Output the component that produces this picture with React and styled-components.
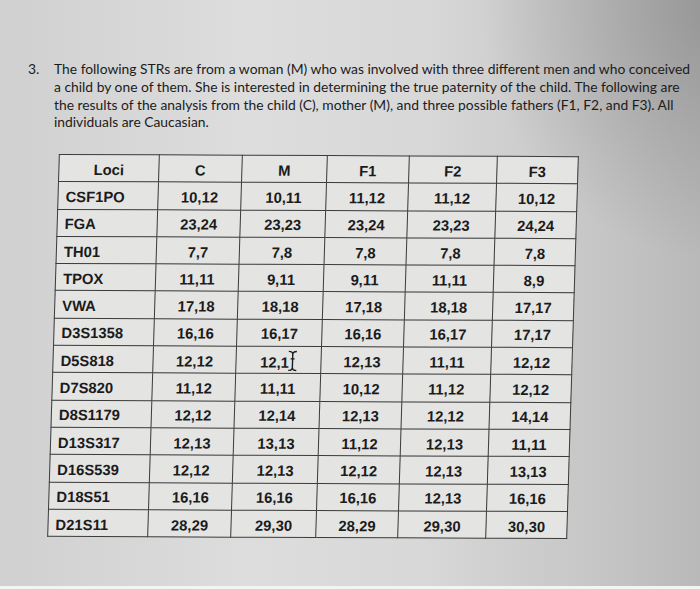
import React from 'react';
import styled, { createGlobalStyle } from 'styled-components';

const Global = createGlobalStyle`
    html, body {
        margin: 0;
        padding: 0;
    }
`;

const Page = styled.div`
    width: 700px;
    height: 589px;
    box-sizing: border-box;
    overflow: hidden;
    display: flex;
    flex-direction: column;
    background:
        radial-gradient(ellipse 240px 260px at 720px 0px, rgba(120,120,120,0.55), rgba(120,120,120,0) 100%),
        linear-gradient(90deg, #cfd0cf 0%, #dcdddc 35%, #d8d8d8 60%, #c6c6c6 85%, #b9b9b9 100%);
`;

const Content = styled.div`
    flex: 1;
    padding: 60px 0 0 28px;
    display: flex;
    flex-direction: column;
`;

const Question = styled.div`
    display: flex;
    font-family: Lato, "Open Sans", sans-serif;
    font-size: 13.85px;
    line-height: 17.8px;
    color: #1c1c1c;
`;

const Num = styled.div`
    width: 26px;
    flex-shrink: 0;
`;

const Lines = styled.div`
    display: flex;
    flex-direction: column;
`;

const Line = styled.div`
    white-space: nowrap;
`;

const Table = styled.table`
    width: 519px;
    margin: 24px 0 0 25px;
    border-collapse: collapse;
    table-layout: fixed;
    font-family: "Liberation Sans", Arial, sans-serif;
    font-weight: 700;
    font-size: 14.8px;
    color: #1b1b1b;
    transform: rotate(0.25deg) skewX(-1.5deg);
    transform-origin: center center;
`;

const Cell = styled.td`
    height: 27.3px;
    padding: 3px 0 0 ${p => (p.$left ? '7px' : '0')};
    border: 1px solid #3c3c3c;
    background: #e4e4e3;
    text-align: ${p => (p.$left ? 'left' : 'center')};
    box-sizing: border-box;
    white-space: nowrap;
    overflow: hidden;
`;

const CursorSlot = styled.span`
    display: inline-block;
    position: relative;
    width: 8px;
    height: 1em;
    vertical-align: baseline;
`;

const Cursor = styled.svg`
    position: absolute;
    left: -1px;
    top: -3px;
`;

const Strip = styled.div`
    height: 3px;
    background: #f4f4f4;
`;

const widths = [100, 83, 85, 82, 88, 81];

const rows = [
    ['Loci', 'C', 'M', 'F1', 'F2', 'F3'],
    ['CSF1PO', '10,12', '10,11', '11,12', '11,12', '10,12'],
    ['FGA', '23,24', '23,23', '23,24', '23,23', '24,24'],
    ['TH01', '7,7', '7,8', '7,8', '7,8', '7,8'],
    ['TPOX', '11,11', '9,11', '9,11', '11,11', '8,9'],
    ['VWA', '17,18', '18,18', '17,18', '18,18', '17,17'],
    ['D3S1358', '16,16', '16,17', '16,16', '16,17', '17,17'],
    ['D5S818', '12,12', '12,1', '12,13', '11,11', '12,12'],
    ['D7S820', '11,12', '11,11', '10,12', '11,12', '12,12'],
    ['D8S1179', '12,12', '12,14', '12,13', '12,12', '14,14'],
    ['D13S317', '12,13', '13,13', '11,12', '12,13', '11,11'],
    ['D16S539', '12,12', '12,13', '12,12', '12,13', '13,13'],
    ['D18S51', '16,16', '16,16', '16,16', '12,13', '16,16'],
    ['D21S11', '28,29', '29,30', '28,29', '29,30', '30,30'],
];

const IBeam = () => (
    <CursorSlot>
        <Cursor width="10" height="22" viewBox="0 0 10 22">
            <path d="M1 1.5 Q5 1.5 5 4.5 Q5 1.5 9 1.5 M5 4.5 V17.5 M1 20.5 Q5 20.5 5 17.5 Q5 20.5 9 20.5 M3 9 H7"
                fill="none" stroke="#1b1b1b" strokeWidth="1.4" />
        </Cursor>
    </CursorSlot>
);

const App = () => {
    return (
        <Page>
            <Global />
            <Content>
                <Question>
                    <Num>3.</Num>
                    <Lines>
                        <Line>The following STRs are from a woman (M) who was involved with three different men and who conceived</Line>
                        <Line>a child by one of them. She is interested in determining the true paternity of the child. The following are</Line>
                        <Line>the results of the analysis from the child (C), mother (M), and three possible fathers (F1, F2, and F3). All</Line>
                        <Line>individuals are Caucasian.</Line>
                    </Lines>
                </Question>
                <Table>
                    <colgroup>
                        {widths.map((w, i) => <col key={i} style={{ width: w }} />)}
                    </colgroup>
                    <tbody>
                        {rows.map((r, ri) => (
                            <tr key={ri}>
                                {r.map((v, ci) => (
                                    <Cell key={ci} $left={ci === 0 && ri > 0}>
                                        {v}
                                        {ri === 7 && ci === 2 && <IBeam />}
                                    </Cell>
                                ))}
                            </tr>
                        ))}
                    </tbody>
                </Table>
            </Content>
            <Strip />
        </Page>
    );
};

export default App;
